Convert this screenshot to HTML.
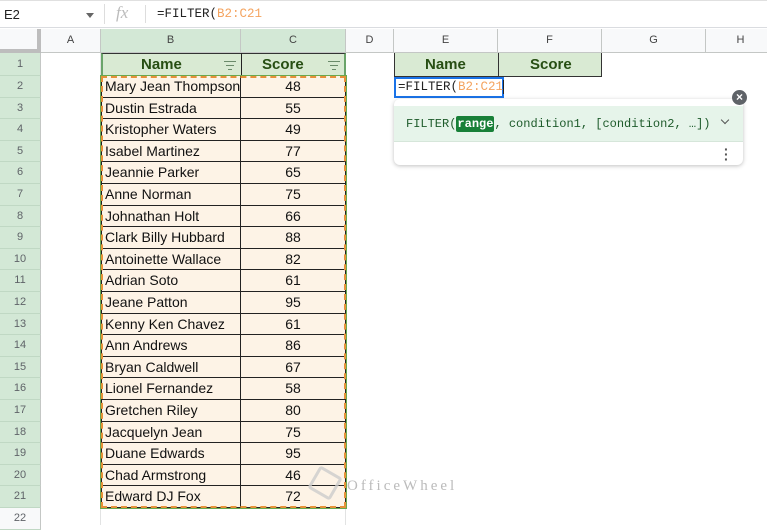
<!DOCTYPE html><html><head><style>
body{margin:0;width:767px;height:525px;overflow:hidden;background:#fff;font-family:"Liberation Sans",Arial,sans-serif;position:relative}
.a{position:absolute;box-sizing:border-box;white-space:nowrap}
.rh{left:0;width:41px;background:#d3e8d6;color:#5f6368;font-size:11px;text-align:center;border-right:1px solid #c4c7c5;border-bottom:1px solid #c0d8c4}
.n{left:101px;width:140px;background:#fdf3e6;border:1px solid #222;border-top:0;font-size:14px;padding-left:3px;color:#111;overflow:hidden}
.s{left:241px;width:105px;background:#fdf3e6;border-right:1px solid #222;border-bottom:1px solid #222;font-size:14px;text-align:center;color:#111}
.ch{top:29px;height:24px;border-right:1px solid #c4c7c5;border-bottom:1px solid #c4c7c5;font-size:11px;color:#444;text-align:center;line-height:22px;background:#f8f9fa}
</style></head><body>
<div class="a" style="left:0;top:0;width:767px;height:28px;border-bottom:1px solid #dadce0;border-top:1px solid #e0e0e0"></div>
<div class="a" style="left:4px;top:7px;font-size:13px;color:#222">E2</div>
<div class="a" style="left:86px;top:13px;border:4px solid transparent;border-top:5px solid #666"></div>
<div class="a" style="left:104px;top:4px;height:20px;border-left:1px solid #ddd"></div>
<div class="a" style="left:116px;top:3px;font-family:'Liberation Serif',serif;font-style:italic;font-size:17px;color:#bbb">fx</div>
<div class="a" style="left:145px;top:5px;height:18px;border-left:1px solid #ddd"></div>
<div class="a" style="left:157px;top:7px;font-family:'Liberation Mono',monospace;font-size:12.5px;color:#222">=FILTER(<span style="color:#f4a460">B2:C21</span></div>
<div class="a" style="left:0;top:29px;width:41px;height:24px;background:#f8f9fa;border-right:4px solid #bdbdbd;border-bottom:4px solid #bdbdbd"></div>
<div class="a ch" style="left:41px;width:60px">A</div>
<div class="a ch" style="left:101px;width:140px;background:#d3e8d6">B</div>
<div class="a ch" style="left:241px;width:105px;background:#d3e8d6">C</div>
<div class="a ch" style="left:346px;width:48px">D</div>
<div class="a ch" style="left:394px;width:104px">E</div>
<div class="a ch" style="left:498px;width:104px">F</div>
<div class="a ch" style="left:602px;width:104px">G</div>
<div class="a ch" style="left:706px;width:70px">H</div>
<div class="a" style="left:100px;top:53px;height:472px;border-left:1px solid #e2e3e3"></div>
<div class="a" style="left:345px;top:53px;height:472px;border-left:1px solid #e2e3e3"></div>
<div class="a" style="left:101px;top:53px;width:245px;height:23px;background:#d9ead3;border:1px solid #333;border-left:2px solid #6aa46a;border-right:2px solid #6aa46a"></div>
<div class="a" style="left:241px;top:53px;height:23px;border-left:1px solid #222"></div>
<div class="a" style="left:141px;top:56px;font-size:15px;font-weight:bold;color:#274e13">Name</div>
<div class="a" style="left:262px;top:56px;font-size:15px;font-weight:bold;color:#274e13">Score</div>
<div class="a" style="left:224px;top:61px;width:12px;border-top:1.5px solid #6a8a6a"></div><div class="a" style="left:226px;top:65px;width:8px;border-top:1.5px solid #6a8a6a"></div><div class="a" style="left:228px;top:69px;width:4px;border-top:1.5px solid #6a8a6a"></div>
<div class="a" style="left:328px;top:61px;width:12px;border-top:1.5px solid #6a8a6a"></div><div class="a" style="left:330px;top:65px;width:8px;border-top:1.5px solid #6a8a6a"></div><div class="a" style="left:332px;top:69px;width:4px;border-top:1.5px solid #6a8a6a"></div>
<div class="a" style="left:394px;top:53px;width:208px;height:24px;background:#d9ead3;border:1px solid #333;border-top:0"></div>
<div class="a" style="left:498px;top:53px;height:24px;border-left:1px solid #333"></div>
<div class="a" style="left:425px;top:56px;font-size:15px;font-weight:bold;color:#274e13">Name</div>
<div class="a" style="left:530px;top:56px;font-size:15px;font-weight:bold;color:#274e13">Score</div>
<div class="a rh" style="top:53px;height:23px;line-height:22px">1</div>
<div class="a rh" style="top:76px;height:21.6px;line-height:21px">2</div>
<div class="a rh" style="top:97.6px;height:21.6px;line-height:21px">3</div>
<div class="a rh" style="top:119.2px;height:21.6px;line-height:21px">4</div>
<div class="a rh" style="top:140.8px;height:21.6px;line-height:21px">5</div>
<div class="a rh" style="top:162.4px;height:21.6px;line-height:21px">6</div>
<div class="a rh" style="top:184px;height:21.6px;line-height:21px">7</div>
<div class="a rh" style="top:205.6px;height:21.6px;line-height:21px">8</div>
<div class="a rh" style="top:227.2px;height:21.6px;line-height:21px">9</div>
<div class="a rh" style="top:248.8px;height:21.6px;line-height:21px">10</div>
<div class="a rh" style="top:270.4px;height:21.6px;line-height:21px">11</div>
<div class="a rh" style="top:292px;height:21.6px;line-height:21px">12</div>
<div class="a rh" style="top:313.6px;height:21.6px;line-height:21px">13</div>
<div class="a rh" style="top:335.2px;height:21.6px;line-height:21px">14</div>
<div class="a rh" style="top:356.8px;height:21.6px;line-height:21px">15</div>
<div class="a rh" style="top:378.4px;height:21.6px;line-height:21px">16</div>
<div class="a rh" style="top:400px;height:21.6px;line-height:21px">17</div>
<div class="a rh" style="top:421.6px;height:21.6px;line-height:21px">18</div>
<div class="a rh" style="top:443.2px;height:21.6px;line-height:21px">19</div>
<div class="a rh" style="top:464.8px;height:21.6px;line-height:21px">20</div>
<div class="a rh" style="top:486.4px;height:21.6px;line-height:21px">21</div>
<div class="a rh" style="top:508px;height:21.6px;line-height:21px;background:#f8f9fa">22</div>
<div class="a n" style="top:76px;height:21.6px;line-height:21px">Mary Jean Thompson</div><div class="a s" style="top:76px;height:21.6px;line-height:21px">48</div>
<div class="a n" style="top:97.6px;height:21.6px;line-height:21px">Dustin Estrada</div><div class="a s" style="top:97.6px;height:21.6px;line-height:21px">55</div>
<div class="a n" style="top:119.2px;height:21.6px;line-height:21px">Kristopher Waters</div><div class="a s" style="top:119.2px;height:21.6px;line-height:21px">49</div>
<div class="a n" style="top:140.8px;height:21.6px;line-height:21px">Isabel Martinez</div><div class="a s" style="top:140.8px;height:21.6px;line-height:21px">77</div>
<div class="a n" style="top:162.4px;height:21.6px;line-height:21px">Jeannie Parker</div><div class="a s" style="top:162.4px;height:21.6px;line-height:21px">65</div>
<div class="a n" style="top:184px;height:21.6px;line-height:21px">Anne Norman</div><div class="a s" style="top:184px;height:21.6px;line-height:21px">75</div>
<div class="a n" style="top:205.6px;height:21.6px;line-height:21px">Johnathan Holt</div><div class="a s" style="top:205.6px;height:21.6px;line-height:21px">66</div>
<div class="a n" style="top:227.2px;height:21.6px;line-height:21px">Clark Billy Hubbard</div><div class="a s" style="top:227.2px;height:21.6px;line-height:21px">88</div>
<div class="a n" style="top:248.8px;height:21.6px;line-height:21px">Antoinette Wallace</div><div class="a s" style="top:248.8px;height:21.6px;line-height:21px">82</div>
<div class="a n" style="top:270.4px;height:21.6px;line-height:21px">Adrian Soto</div><div class="a s" style="top:270.4px;height:21.6px;line-height:21px">61</div>
<div class="a n" style="top:292px;height:21.6px;line-height:21px">Jeane Patton</div><div class="a s" style="top:292px;height:21.6px;line-height:21px">95</div>
<div class="a n" style="top:313.6px;height:21.6px;line-height:21px">Kenny Ken Chavez</div><div class="a s" style="top:313.6px;height:21.6px;line-height:21px">61</div>
<div class="a n" style="top:335.2px;height:21.6px;line-height:21px">Ann Andrews</div><div class="a s" style="top:335.2px;height:21.6px;line-height:21px">86</div>
<div class="a n" style="top:356.8px;height:21.6px;line-height:21px">Bryan Caldwell</div><div class="a s" style="top:356.8px;height:21.6px;line-height:21px">67</div>
<div class="a n" style="top:378.4px;height:21.6px;line-height:21px">Lionel Fernandez</div><div class="a s" style="top:378.4px;height:21.6px;line-height:21px">58</div>
<div class="a n" style="top:400px;height:21.6px;line-height:21px">Gretchen Riley</div><div class="a s" style="top:400px;height:21.6px;line-height:21px">80</div>
<div class="a n" style="top:421.6px;height:21.6px;line-height:21px">Jacquelyn Jean</div><div class="a s" style="top:421.6px;height:21.6px;line-height:21px">75</div>
<div class="a n" style="top:443.2px;height:21.6px;line-height:21px">Duane Edwards</div><div class="a s" style="top:443.2px;height:21.6px;line-height:21px">95</div>
<div class="a n" style="top:464.8px;height:21.6px;line-height:21px">Chad Armstrong</div><div class="a s" style="top:464.8px;height:21.6px;line-height:21px">46</div>
<div class="a n" style="top:486.4px;height:21.6px;line-height:21px">Edward DJ Fox</div><div class="a s" style="top:486.4px;height:21.6px;line-height:21px">72</div>
<div class="a" style="left:101px;top:76px;width:245px;height:432px;border:2px dashed #e69138;outline:1px solid #6aa84f"></div>
<div class="a" style="left:394px;top:77px;width:110px;height:21px;border:2px solid #1a73e8;background:#fff;font-family:'Liberation Mono',monospace;font-size:12.5px;line-height:17px;padding-left:2px;color:#222">=FILTER(<span style="color:#f4a460">B2:C21</span><span style="border-left:1px solid #222"></span></div>
<div class="a" style="left:394px;top:99px;width:349px;height:66px;background:#fff;border-radius:6px;box-shadow:0 1px 4px rgba(0,0,0,.25)"></div>
<div class="a" style="left:394px;top:106px;width:349px;height:36px;background:#e6f4ea;border-bottom:1px solid #d6e6da"></div>
<div class="a" style="left:406px;top:117px;font-family:'Liberation Mono',monospace;font-size:12px;color:#1e5b2b">FILTER(<span style="background:#188038;color:#fff;font-weight:bold;border-radius:2px;padding:1px 1px">range</span>, condition1, [condition2, …])</div>
<div class="a" style="left:722px;top:117px;width:6px;height:6px;border-right:1.5px solid #555;border-bottom:1.5px solid #555;transform:rotate(45deg)"></div>
<div class="a" style="left:724px;top:147px;color:#555;font-size:14px;line-height:5px;font-weight:bold">·<br>·<br>·</div>
<div class="a" style="left:732px;top:90px;width:15px;height:15px;border-radius:50%;background:#5f6368;color:#fff;font-size:12px;line-height:15px;text-align:center;font-weight:bold">×</div>
<div class="a" style="left:312px;top:470px;width:26px;height:26px;border:3px solid #ccc;transform:rotate(30deg);border-radius:3px;opacity:.8"></div>
<div class="a" style="left:347px;top:478px;font-family:'Liberation Serif',serif;font-size:15px;letter-spacing:3px;color:#bbb">OfficeWheel</div>
</body></html>
